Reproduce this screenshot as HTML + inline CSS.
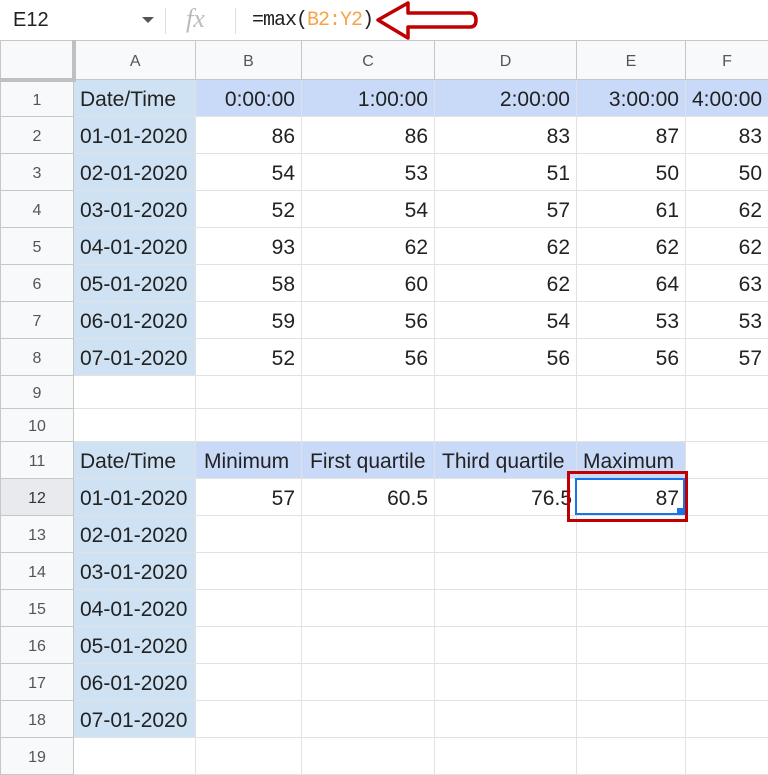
<!DOCTYPE html>
<html><head><meta charset="utf-8"><style>
body{margin:0;width:768px;height:773px;overflow:hidden;background:#fff;font-family:"Liberation Sans",Arial,sans-serif;position:relative}
.fb{position:absolute;left:0;top:0;width:768px;height:40px;border-bottom:1px solid #c7c7c7;background:#fff}
table{position:absolute;left:0;top:40px;width:768px;border-collapse:collapse;table-layout:fixed}
td{border:1px solid #e2e2e2;padding:4px 6px 0 6px;font-size:21px;color:#222;white-space:nowrap;overflow:visible;text-align:right}
td.h{background:#f8f9fa;color:#555;text-align:center;font-size:16px;border-color:#c7c7c7}
td.a{background:#cfe2f3;text-align:left}
td.b{background:#c9daf8}
td.l{text-align:left}
</style></head><body>
<div class="fb">
 <div style="position:absolute;left:13px;top:9px;font-size:20px;color:#222">E12</div>
 <div style="position:absolute;left:142px;top:17px;width:0;height:0;border-left:6px solid transparent;border-right:6px solid transparent;border-top:6px solid #555"></div>
 <div style="position:absolute;left:165px;top:8px;width:1px;height:26px;background:#ddd"></div>
 <div style="position:absolute;left:186px;top:4px;font-size:26px;font-style:italic;color:#bbb;font-family:'Liberation Serif',serif">fx</div>
 <div style="position:absolute;left:235px;top:8px;width:1px;height:26px;background:#ddd"></div>
 <div style="position:absolute;left:252px;top:9px;font-size:20px;font-family:'Liberation Mono',monospace;color:#222;letter-spacing:-1px">=max(<span style="color:#f4a44a">B2:Y2</span>)</div>
 <svg style="position:absolute;left:372px;top:0" width="110" height="42"><path d="M6 20 L36 3 L36 13 L98 13 Q104 13 104 20 Q104 27 98 27 L36 27 L36 38 Z" fill="none" stroke="#c00000" stroke-width="3.5" stroke-linejoin="round"/></svg>
</div>
<table>
<colgroup><col style="width:73px"><col style="width:122px"><col style="width:106px"><col style="width:133px"><col style="width:142px"><col style="width:109px"><col style="width:83px"></colgroup>
<tr style="height:39px"><td class="h" style="border-right:4px solid #c0c0c0;border-bottom:4px solid #c0c0c0"></td><td class="h">A</td><td class="h">B</td><td class="h">C</td><td class="h">D</td><td class="h">E</td><td class="h">F</td></tr>
<tr style="height:37px"><td class="h">1</td><td class="a">Date/Time</td><td class="b">0:00:00</td><td class="b">1:00:00</td><td class="b">2:00:00</td><td class="b">3:00:00</td><td class="b l">4:00:00</td></tr>
<tr style="height:37px"><td class="h">2</td><td class="a">01-01-2020</td><td>86</td><td>86</td><td>83</td><td>87</td><td>83</td></tr>
<tr style="height:37px"><td class="h">3</td><td class="a">02-01-2020</td><td>54</td><td>53</td><td>51</td><td>50</td><td>50</td></tr>
<tr style="height:37px"><td class="h">4</td><td class="a">03-01-2020</td><td>52</td><td>54</td><td>57</td><td>61</td><td>62</td></tr>
<tr style="height:37px"><td class="h">5</td><td class="a">04-01-2020</td><td>93</td><td>62</td><td>62</td><td>62</td><td>62</td></tr>
<tr style="height:37px"><td class="h">6</td><td class="a">05-01-2020</td><td>58</td><td>60</td><td>62</td><td>64</td><td>63</td></tr>
<tr style="height:37px"><td class="h">7</td><td class="a">06-01-2020</td><td>59</td><td>56</td><td>54</td><td>53</td><td>53</td></tr>
<tr style="height:37px"><td class="h">8</td><td class="a">07-01-2020</td><td>52</td><td>56</td><td>56</td><td>56</td><td>57</td></tr>
<tr style="height:33px"><td class="h">9</td><td></td><td></td><td></td><td></td><td></td><td></td></tr>
<tr style="height:33px"><td class="h">10</td><td></td><td></td><td></td><td></td><td></td><td></td></tr>
<tr style="height:37px"><td class="h">11</td><td class="a">Date/Time</td><td class="b l" style="padding-left:8px">Minimum</td><td class="b l" style="padding-left:8px">First quartile</td><td class="b l" style="padding-left:7px">Third quartile</td><td class="b l" style="padding-left:6px">Maximum</td><td></td></tr>
<tr style="height:37px"><td class="h" style="background:#e8eaed;color:#333">12</td><td class="a">01-01-2020</td><td>57</td><td>60.5</td><td style="padding-right:4px">76.5</td><td>87</td><td></td></tr>
<tr style="height:37px"><td class="h">13</td><td class="a">02-01-2020</td><td></td><td></td><td></td><td></td><td></td></tr>
<tr style="height:37px"><td class="h">14</td><td class="a">03-01-2020</td><td></td><td></td><td></td><td></td><td></td></tr>
<tr style="height:37px"><td class="h">15</td><td class="a">04-01-2020</td><td></td><td></td><td></td><td></td><td></td></tr>
<tr style="height:37px"><td class="h">16</td><td class="a">05-01-2020</td><td></td><td></td><td></td><td></td><td></td></tr>
<tr style="height:37px"><td class="h">17</td><td class="a">06-01-2020</td><td></td><td></td><td></td><td></td><td></td></tr>
<tr style="height:37px"><td class="h">18</td><td class="a">07-01-2020</td><td></td><td></td><td></td><td></td><td></td></tr>
<tr style="height:37px"><td class="h">19</td><td></td><td></td><td></td><td></td><td></td><td></td></tr>
</table>
<div style="position:absolute;left:575px;top:478px;width:106px;height:33px;border:2px solid #1a73e8"></div>
<div style="position:absolute;left:677px;top:508px;width:7px;height:7px;background:#1a73e8"></div>
<div style="position:absolute;left:567px;top:471px;width:115px;height:45px;border:3.5px solid #c00000"></div>
</body></html>
